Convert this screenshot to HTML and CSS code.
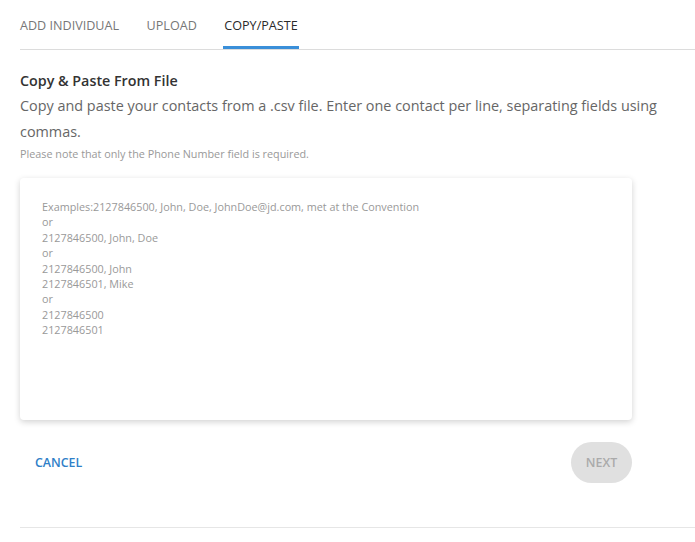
FILE: index.html
```html
<!DOCTYPE html>
<html>
<head>
<meta charset="utf-8">
<link rel="stylesheet" href="styles.css">
</head>
<body>
<div class="page">
  <nav class="tabs">
    <div class="tab">ADD INDIVIDUAL</div>
    <div class="tab">UPLOAD</div>
    <div class="tab active">COPY/PASTE</div>
  </nav>
  <section class="content">
    <h2 class="title">Copy &amp; Paste From File</h2>
    <p class="desc">Copy and paste your contacts from a .csv file. Enter one contact per line, separating fields using commas.</p>
    <p class="note">Please note that only the Phone Number field is required.</p>
    <div class="card">
      <div class="placeholder">Examples:2127846500, John, Doe, JohnDoe@jd.com, met at the Convention<br>or<br>2127846500, John, Doe<br>or<br>2127846500, John<br>2127846501, Mike<br>or<br>2127846500<br>2127846501</div>
    </div>
    <div class="actions">
      <button class="cancel">CANCEL</button>
      <button class="next">NEXT</button>
    </div>
  </section>
</div>
</body>
</html>
```
FILE: styles.css
```css
html, body {
  margin: 0;
  padding: 0;
  background: #fff;
  font-family: "Open Sans", "Liberation Sans", sans-serif;
}
.page {
  padding-left: 20px;
}
.tabs {
  display: flex;
  height: 49px;
  border-bottom: 1px solid #dcdcdc;
  box-sizing: content-box;
}
.tab {
  font-size: 12.6px;
  color: #777;
  padding: 17px 1px 0;
  margin-right: 26.5px;
  margin-left: -1px;
  box-sizing: border-box;
  height: 49px;
  border-bottom: 3px solid transparent;
  line-height: 17px;
}
.tab.active {
  color: #2a2a2a;
  font-weight: 500;
  border-bottom-color: #3a8fd9;
}
.content {
  width: 612px;
}
.title {
  margin: 21px 0 0;
  font-size: 14.3px;
  font-weight: 600;
  color: #333;
  line-height: 20px;
}
.desc {
  margin: 2px 0 0;
  font-size: 14.4px;
  line-height: 26px;
  color: #666;
  width: 660px;
}
.note {
  margin: 2px 0 0;
  font-size: 10.8px;
  line-height: 14px;
  color: #999;
}
.card {
  margin-top: 17px;
  height: 242px;
  background: #fff;
  border-radius: 4px;
  box-shadow: 0 2px 6px rgba(0,0,0,0.18);
  padding: 21px 22px;
  box-sizing: border-box;
}
.placeholder {
  font-size: 10.8px;
  line-height: 15.4px;
  color: #999;
}
.actions {
  display: flex;
  justify-content: space-between;
  align-items: center;
  margin-top: 22px;
  height: 41px;
}
.cancel {
  background: none;
  border: none;
  font-family: inherit;
  font-size: 12.4px;
  font-weight: 600;
  color: #2f80c8;
  padding: 0 15px;
  cursor: pointer;
}
.next {
  width: 61px;
  height: 41px;
  border: none;
  border-radius: 21px;
  background: #e0e0e0;
  color: #aaa;
  font-family: inherit;
  font-size: 12.4px;
  font-weight: 600;
  padding: 0;
}
.page::after {
  content: "";
  display: block;
  margin-top: 44px;
  border-bottom: 1px solid #e6e6e6;
}
```
